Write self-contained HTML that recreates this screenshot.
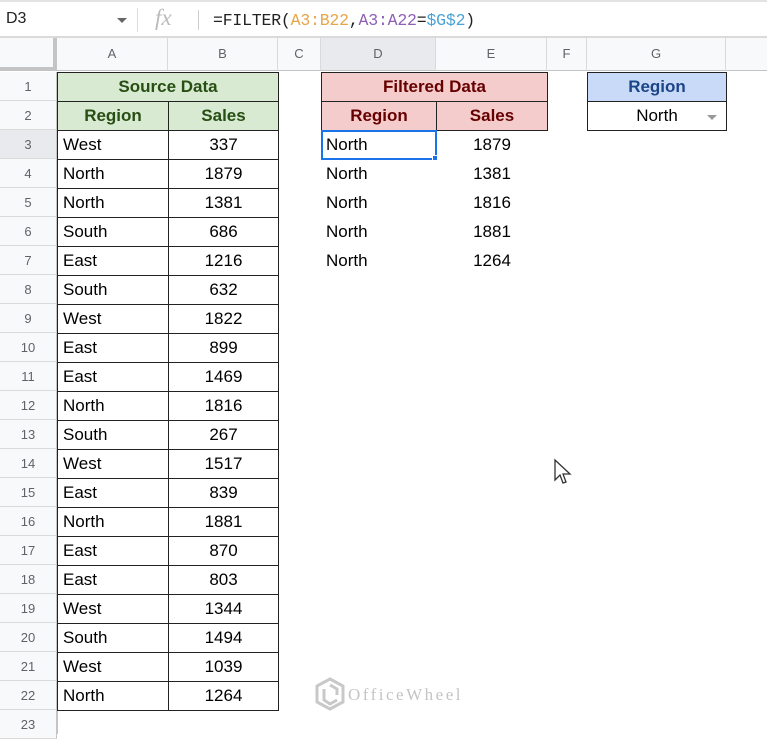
<!DOCTYPE html>
<html><head><meta charset="utf-8"><style>
*{margin:0;padding:0;box-sizing:border-box}
body{width:767px;height:734px;background:#fff;font-family:"Liberation Sans",Arial,sans-serif;position:relative;overflow:hidden}
.abs{position:absolute}
.fbar{left:0;top:0;width:767px;height:38px;background:#fff;border-top:2px solid #e3e3e3;border-bottom:2px solid #dadada}
.colhdr{top:38px;height:33px;background:#f8f9fa;border-right:1px solid #dadada;border-bottom:1px solid #c4c4c4;color:#5f6368;font-size:13px;text-align:center;line-height:32px}
.rowhdr{left:0;width:57px;height:29px;background:#f8f9fa;border-bottom:1px solid #dadada;border-right:1px solid #c4c4c4;color:#5f6368;font-size:13px;text-align:center;line-height:29px}
table{position:absolute;border-collapse:collapse;font-size:17px}
td{height:29px;padding:0 5px;border:1px solid #222;white-space:nowrap}
td.n{text-align:center}
td.h{text-align:center;font-weight:bold}
.plain td{border:none}
</style></head><body>
<div class="abs fbar">
 <div class="abs" style="left:6px;top:8px;font-size:16px;color:#222">D3</div>
 <div class="abs" style="left:117px;top:16px;border-left:5px solid transparent;border-right:5px solid transparent;border-top:5px solid #666"></div>
 <div class="abs" style="left:137px;top:6px;width:1px;height:24px;background:#ddd"></div>
 <div class="abs" style="left:155px;top:3px;font-size:23px;font-style:italic;color:#bbb;font-family:'Liberation Serif',serif">fx</div>
 <div class="abs" style="left:198px;top:8px;width:1px;height:20px;background:#ccc"></div>
 <div class="abs" style="left:213px;top:9px;font-size:16.5px;font-family:'Liberation Mono',monospace;color:#222;letter-spacing:-0.2px">=FILTER(<span style="color:#e8a54b">A3:B22</span>,<span style="color:#8e5fb8">A3:A22</span>=<span style="color:#4aa3d8">$G$2</span>)</div>
</div>
<div class="abs colhdr" style="left:0;width:57px;border-right:4px solid #c4c4c4;border-bottom:4px solid #c4c4c4"></div>
<div class="abs colhdr" style="left:57px;width:111px">A</div>
<div class="abs colhdr" style="left:168px;width:110px">B</div>
<div class="abs colhdr" style="left:278px;width:43px">C</div>
<div class="abs colhdr" style="left:321px;width:115px;background:#e8eaed">D</div>
<div class="abs colhdr" style="left:436px;width:111px">E</div>
<div class="abs colhdr" style="left:547px;width:40px">F</div>
<div class="abs colhdr" style="left:587px;width:139px">G</div>
<div class="abs colhdr" style="left:726px;width:41px;border-right:none"></div>
<div id="rh"></div>
<div class="abs" style="left:57px;top:72px;width:1px;height:662px;background:#c4c4c4"></div>

<table style="left:57px;top:72px;width:222px">
<tr><td colspan="2" class="h" style="background:#d9ead3;color:#274e13">Source Data</td></tr>
<tr><td class="h" style="background:#d9ead3;color:#274e13;width:111px">Region</td><td class="h" style="background:#d9ead3;color:#274e13">Sales</td></tr>
<tr><td>West</td><td class="n">337</td></tr>
<tr><td>North</td><td class="n">1879</td></tr>
<tr><td>North</td><td class="n">1381</td></tr>
<tr><td>South</td><td class="n">686</td></tr>
<tr><td>East</td><td class="n">1216</td></tr>
<tr><td>South</td><td class="n">632</td></tr>
<tr><td>West</td><td class="n">1822</td></tr>
<tr><td>East</td><td class="n">899</td></tr>
<tr><td>East</td><td class="n">1469</td></tr>
<tr><td>North</td><td class="n">1816</td></tr>
<tr><td>South</td><td class="n">267</td></tr>
<tr><td>West</td><td class="n">1517</td></tr>
<tr><td>East</td><td class="n">839</td></tr>
<tr><td>North</td><td class="n">1881</td></tr>
<tr><td>East</td><td class="n">870</td></tr>
<tr><td>East</td><td class="n">803</td></tr>
<tr><td>West</td><td class="n">1344</td></tr>
<tr><td>South</td><td class="n">1494</td></tr>
<tr><td>West</td><td class="n">1039</td></tr>
<tr><td>North</td><td class="n">1264</td></tr>
</table>

<table style="left:321px;top:72px;width:227px">
<tr><td colspan="2" class="h" style="background:#f4cccc;color:#660000">Filtered Data</td></tr>
<tr><td class="h" style="background:#f4cccc;color:#660000;width:115px">Region</td><td class="h" style="background:#f4cccc;color:#660000">Sales</td></tr>
</table>
<table class="plain" style="left:321px;top:130px;width:227px">
<tr><td style="width:115px">North</td><td class="n">1879</td></tr>
<tr><td>North</td><td class="n">1381</td></tr>
<tr><td>North</td><td class="n">1816</td></tr>
<tr><td>North</td><td class="n">1881</td></tr>
<tr><td>North</td><td class="n">1264</td></tr>
</table>
<div class="abs" style="left:321px;top:130px;width:116px;height:30px;border:2px solid #1a73e8"></div>
<div class="abs" style="left:432px;top:155px;width:6px;height:6px;background:#1a73e8;border:1px solid #fff"></div>

<table style="left:587px;top:72px;width:140px">
<tr><td class="h" style="background:#c9daf8;color:#1c4587">Region</td></tr>
<tr><td class="n" style="position:relative">North<span style="position:absolute;right:9px;top:13px;border-left:5px solid transparent;border-right:5px solid transparent;border-top:5px solid #999"></span></td></tr>
</table>

<svg class="abs" style="left:553px;top:458px" width="20" height="28" viewBox="0 0 20 28"><path d="M2 2 L2 22 L7 17 L10 25 L13 24 L10 16 L17 16 Z" fill="#fff" stroke="#333" stroke-width="1.3"/></svg>

<svg class="abs" style="left:310px;top:675px" width="40" height="40" viewBox="0 0 40 40"><path d="M20 4 L33 11 L33 27 L20 34 L7 27 L7 11 Z M14 14 L14 25 L20 29 L27 25 M20 10 L27 14 L27 20" fill="none" stroke="#c8c8c8" stroke-width="3"/></svg>
<div class="abs" style="left:348px;top:685px;font-family:'Liberation Serif',serif;font-size:17px;letter-spacing:2.5px;color:#c4c4c4">OfficeWheel</div>

<script>
var h='';for(var i=1;i<=23;i++){h+='<div class="abs rowhdr" style="top:'+(72+(i-1)*29)+'px'+(i==3?';background:#e8eaed':'')+'">'+i+'</div>';}
document.getElementById('rh').innerHTML=h;
</script>
</body></html>
